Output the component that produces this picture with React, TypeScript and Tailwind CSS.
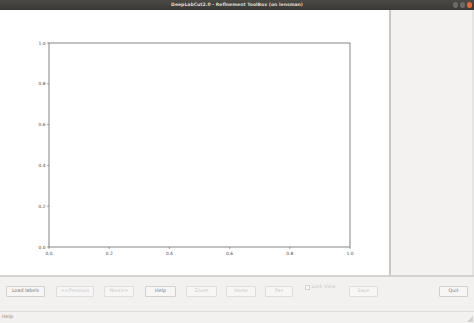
import React from "react";

// Toolbar buttons, left to right, with pixel positions read off the reference
const buttons: { label: string; left: number; width: number; enabled: boolean }[] = [
  { label: "Load labels", left: 6, width: 39, enabled: true },
  { label: "<<Previous", left: 56, width: 38, enabled: false },
  { label: "Next>>", left: 104, width: 30, enabled: false },
  { label: "Help", left: 145, width: 31, enabled: true },
  { label: "Zoom", left: 186, width: 31, enabled: false },
  { label: "Home", left: 226, width: 30, enabled: false },
  { label: "Pan", left: 265, width: 28, enabled: false },
];

function Plot() {
  const x0 = 49;
  const x1 = 350;
  const y0 = 33;
  const y1 = 237;
  const ticks = [0, 0.2, 0.4, 0.6, 0.8, 1.0];
  return (
    <svg width={389} height={267} className="block">
      <rect x={x0} y={y0} width={x1 - x0} height={y1 - y0} fill="white" stroke="#666" strokeWidth={0.8} />
      {ticks.map((t) => {
        const x = x0 + t * (x1 - x0);
        const y = y1 - t * (y1 - y0);
        return (
          <g key={t} fontFamily="'DejaVu Sans', sans-serif" fontSize={4.4} fill="#444">
            <line x1={x} y1={y1} x2={x} y2={y1 + 2} stroke="#666" strokeWidth={0.6} />
            <text x={x} y={y1 + 7.5} textAnchor="middle">
              {t.toFixed(1)}
            </text>
            <line x1={x0 - 2} y1={y} x2={x0} y2={y} stroke="#666" strokeWidth={0.6} />
            <text x={x0 - 3.5} y={y + 1.6} textAnchor="end">
              {t.toFixed(1)}
            </text>
          </g>
        );
      })}
    </svg>
  );
}

function ToolButton({ label, enabled }: { label: string; enabled: boolean }) {
  return (
    <div
      className={`h-[11px] flex items-center justify-center rounded-[1px] border bg-[#f7f6f5] text-[4.8px] leading-none ${
        enabled ? "border-[#d2d0cd] text-[#777]" : "border-[#e0deda] text-[#cac8c5]"
      }`}
    >
      {label}
    </div>
  );
}

export default function App() {
  return (
    <div className="w-[474px] h-[323px] flex flex-col bg-[#f2f1f0] overflow-hidden font-['DejaVu_Sans',sans-serif]">
      {/* title bar */}
      <div className="h-[10px] relative flex items-center justify-center bg-gradient-to-b from-[#4a4944] to-[#3a3935]">
        <span className="text-[4.6px] font-bold text-[#dfdbd2] leading-none">
          DeepLabCut2.0 - Refinement ToolBox (on lensman)
        </span>
        <div className="absolute right-[2px] top-[2px] flex gap-[1.5px]">
          <span className="w-[5.5px] h-[5.5px] rounded-full bg-[#6b6a66]" />
          <span className="w-[5.5px] h-[5.5px] rounded-full bg-[#6b6a66]" />
          <span className="w-[5.5px] h-[5.5px] rounded-full bg-[#e9663a]" />
        </div>
      </div>

      {/* canvas + side panel */}
      <div className="h-[267px] flex border-b-[2px] border-[#d4d2cf]">
        <div className="w-[389px] bg-white">
          <Plot />
        </div>
        <div className="w-[2px] bg-[#c9c7c4]" />
        <div className="flex-1 bg-[#f3f2f1] border-r-[2px] border-[#e6e4e1]" />
      </div>

      {/* toolbar */}
      <div className="h-[34px] relative pt-[9px]">
        <div className="relative h-[11px]">
          {buttons.map((b) => (
            <div key={b.label} className="absolute top-0" style={{ left: b.left, width: b.width }}>
              <ToolButton label={b.label} enabled={b.enabled} />
            </div>
          ))}
          <div className="absolute left-[305px] top-[-1px] flex items-center gap-[1.5px]">
            <span className="w-[5px] h-[5px] border border-[#d4d2cf] bg-[#f8f7f6]" />
            <span className="text-[4.8px] leading-none text-[#cac8c5]">Lock View</span>
          </div>
          <div className="absolute top-0 left-[349px] w-[29px]">
            <ToolButton label="Save" enabled={false} />
          </div>
          <div className="absolute top-0 left-[439px] w-[29px]">
            <ToolButton label="Quit" enabled={true} />
          </div>
        </div>
      </div>

      {/* status bar */}
      <div className="flex-1 relative border-t border-[#dddbd8] flex items-center px-[2px]">
        <span className="text-[4.8px] leading-none text-[#888]">Help</span>
        <svg width={6} height={6} className="absolute right-[1px] bottom-[1px]">
          <path d="M6 0 L6 6 L0 6 Z" fill="#d4d2cf" />
        </svg>
      </div>
    </div>
  );
}
